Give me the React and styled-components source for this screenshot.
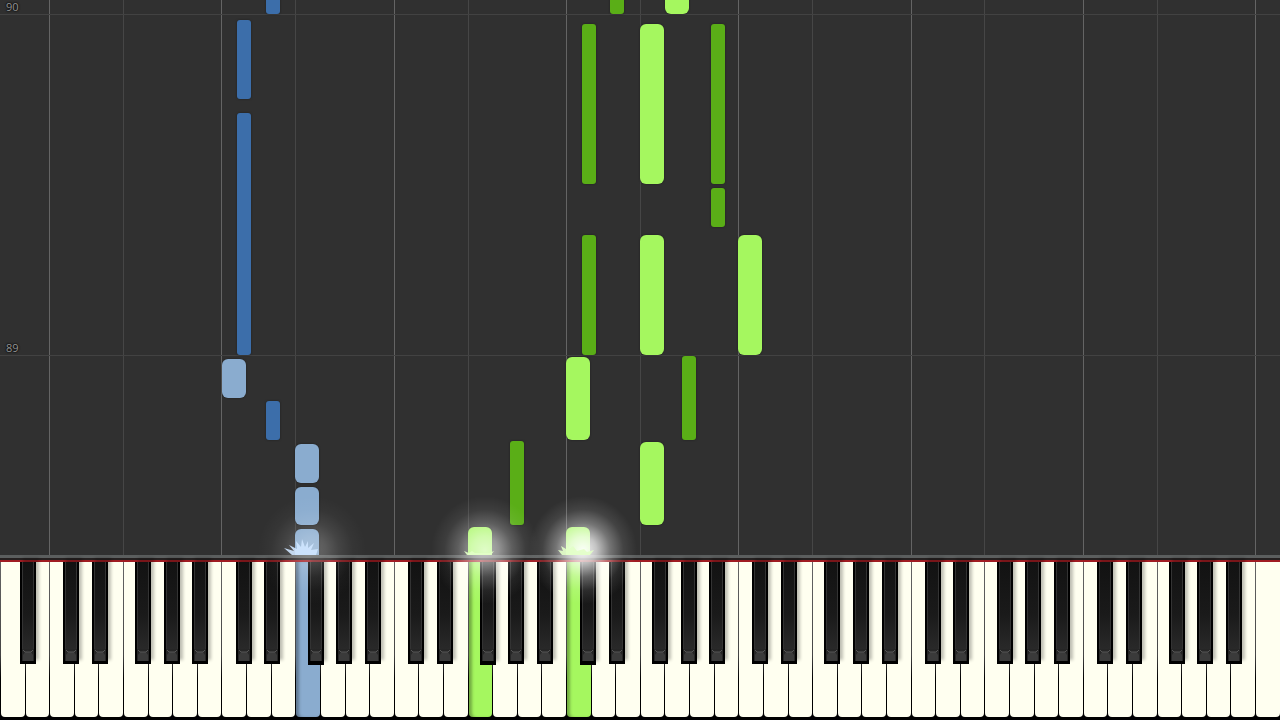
import React from 'react';
import styled, { createGlobalStyle } from 'styled-components';

const WHITE_COUNT = 52;
const SEMITONES = (WHITE_COUNT / 7) * 12;

// How far into its white key each black key starts
const BLACK_OFFSETS = { C: '57%', D: '74%', F: '50%', G: '66%', A: '82%' };
const LETTERS = ['A', 'B', 'C', 'D', 'E', 'F', 'G'];

const whiteKeys = Array.from({ length: WHITE_COUNT }, (_, index) => {
    const letter = LETTERS[index % 7];
    const octave = Math.floor((index + 5) / 7);
    const sharp = index < WHITE_COUNT - 1 ? BLACK_OFFSETS[letter] : undefined;
    return { index, letter, octave, sharp, name: `${letter}${octave}` };
});

const pressed = { F2: 'blue', F3: 'green', C4: 'green' };

const COLORS = {
    blue: { white: '#8aaccf', black: '#3c6eaa' },
    green: { white: '#a5f75f', black: '#5aae17' },
};

// start: distance above the strike line, length: height of the bar
const notes = [
    { name: 'D#2', hand: 'blue', start: 541, length: 39 },
    { name: 'C#2', hand: 'blue', start: 456, length: 79 },
    { name: 'C#2', hand: 'blue', start: 200, length: 242 },
    { name: 'C2', hand: 'blue', start: 157, length: 39 },
    { name: 'D#2', hand: 'blue', start: 115, length: 39 },
    { name: 'F2', hand: 'blue', start: 72, length: 39 },
    { name: 'F2', hand: 'blue', start: 30, length: 38 },
    { name: 'F2', hand: 'blue', start: -13, length: 39 },
    { name: 'D#4', hand: 'green', start: 541, length: 39 },
    { name: 'G4', hand: 'green', start: 541, length: 39 },
    { name: 'C#4', hand: 'green', start: 371, length: 160 },
    { name: 'F4', hand: 'green', start: 371, length: 160 },
    { name: 'A#4', hand: 'green', start: 371, length: 160 },
    { name: 'A#4', hand: 'green', start: 328, length: 39 },
    { name: 'C#4', hand: 'green', start: 200, length: 120 },
    { name: 'F4', hand: 'green', start: 200, length: 120 },
    { name: 'C5', hand: 'green', start: 200, length: 120 },
    { name: 'C4', hand: 'green', start: 115, length: 83 },
    { name: 'G#4', hand: 'green', start: 115, length: 84 },
    { name: 'G#3', hand: 'green', start: 30, length: 84 },
    { name: 'F4', hand: 'green', start: 30, length: 83 },
    { name: 'F3', hand: 'green', start: -56, length: 84 },
    { name: 'C4', hand: 'green', start: -56, length: 84 },
];

const measures = [
    { label: '90', start: 540 },
    { label: '89', start: 199 },
];

const STEPS = { C: 1, D: 3, F: 6, G: 8, A: 10 };

const noteLeft = (name) => {
    const octave = Number(name.slice(-1));
    if (name.includes('#')) {
        // only A and B come before the first C
        const firstC = (2 / WHITE_COUNT) * 100;
        const semitones = (octave - 1) * 12 + STEPS[name[0]];
        return firstC + (semitones / SEMITONES) * 100;
    }
    const white = whiteKeys.find((key) => key.name === name);
    return (white.index / WHITE_COUNT) * 100;
};

const GlobalStyle = createGlobalStyle`
    * {
        box-sizing: border-box;
    }

    body {
        margin: 0;
        background: #000;
        font-family: "Open Sans", sans-serif;
    }
`;

const PageSC = styled.main`
    min-height: 100vh;
    display: flex;
    flex-direction: column;
    overflow: hidden;
`;

const RollSC = styled.section`
    position: relative;
    flex: 1;
    min-height: 300px;
    display: flex;
    overflow: hidden;
    background: #303030;
`;

const LaneSC = styled.div`
    flex: 1;
    border-left: 1px solid ${({ $line }) => $line};
`;

const MeasureSC = styled.div`
    position: absolute;
    left: 0;
    right: 0;
    padding-left: 6px;
    border-bottom: 1px solid #424242;
    color: #949494;
    font-size: 11px;
    line-height: 14px;
    text-shadow: 0 0 2px #000, 0 0 2px #000;
`;

const NoteSC = styled.div`
    position: absolute;
    width: ${({ $black }) => ($black ? '14px' : '24px')};
    margin-left: ${({ $black }) => ($black ? '1px' : '0')};
    border-radius: ${({ $black }) => ($black ? '3px' : '6px')};
    background: ${({ $color }) => $color};
    box-shadow: 0 0 2px #1c1c1c;
`;

const RailSC = styled.div`
    height: 7px;
    border-top: 3px solid #5b5e5e;
    border-bottom: 2px solid #a01c22;
    background: #252020;
`;

const KeyboardSC = styled.section`
    height: 158px;
    display: flex;
    padding-bottom: 3px;
    background: #000;
`;

const SlotSC = styled.div`
    position: relative;
    flex: 1;
    display: flex;
    padding-left: 1px;
    background: linear-gradient(#666 0, #444 60%, #000 75%);
`;

const WhiteKeySC = styled.button`
    flex: 1;
    min-width: 0;
    padding: 0;
    border: 0;
    border-radius: 0 0 4px 4px;
    background: ${({ $color }) => $color || '#fffff0'};
    box-shadow: ${({ $color }) => ($color ? 'inset 4px 0 3px -1px rgba(0, 0, 0, 0.3)' : 'none')};
`;

const BlackKeySC = styled.button`
    position: absolute;
    z-index: 1;
    top: 0;
    left: ${({ $left }) => $left};
    width: 16px;
    height: ${({ $low }) => ($low ? '103px' : '102px')};
    padding: 0 2px ${({ $low }) => ($low ? '4px' : '3px')};
    border: 0;
    display: flex;
    flex-direction: column;
    justify-content: flex-end;
    background: #000;
    box-shadow: 3px -4px 3px rgba(0, 0, 0, 0.25);
`;

const BlackTopSC = styled.span`
    flex: 1;
    border: solid #333;
    border-width: 0 1px;
    background: linear-gradient(#121212, #1a1a1a 60%, #292929);
`;

const BlackLipSC = styled.svg`
    width: 12px;
    height: 12px;
    background: #262626;
`;

const EffectSC = styled.svg`
    position: absolute;
    z-index: 2;
    top: -72px;
    left: -48px;
    width: 120px;
    height: 120px;
    pointer-events: none;
`;

const SPARKS = {
    F2: 'M10 56 L2 49 L12 52 L7 46 L15 50 L14 42 L19 48 L20 40 L23 48 L26 42 L26 49 L32 44 L29 51 L36 50 L34 56Z',
    F3: 'M12 56 L9 52 L14 54 L17 52 L20 54 L29 54 L34 54 L39 52 L36 56Z',
    C4: 'M9 56 L5 51 L10 52 L8 47 L13 50 L13 43 L16 50 L20 47 L24 52 L31 50 L34 53 L41 51 L37 56Z',
};

const GLOW = { F2: 0.28, F3: 0.65, C4: 0.95 };

const Effect = ({ name, hand }) => {
    const id = `glow-${name}`;
    const glow = GLOW[name];
    return (
        <EffectSC viewBox="0 0 120 120" aria-hidden="true">
            <defs>
                <radialGradient id={id}>
                    <stop offset="0" stopColor="#fff" stopOpacity={glow} />
                    <stop offset="0.25" stopColor="#fff" stopOpacity={glow * 0.75} />
                    <stop offset="0.5" stopColor="#fff" stopOpacity={glow * 0.35} />
                    <stop offset="0.75" stopColor="#fff" stopOpacity={glow * 0.1} />
                    <stop offset="1" stopColor="#fff" stopOpacity="0" />
                </radialGradient>
            </defs>
            <circle cx="65" cy="60" r="54" fill={`url(#${id})`} />
            <path
                d={SPARKS[name]}
                transform="translate(35 9)"
                fill={hand === 'blue' ? '#cfe5ff' : '#e2ffc8'}
                fillOpacity="0.9"
            />
        </EffectSC>
    );
};

const laneLine = (letter) => {
    if (letter === 'C') return '#646464';
    if (letter === 'F') return '#464646';
    return 'transparent';
};

const App = () => {
    return (
        <PageSC>
            <GlobalStyle />

            <RollSC aria-label="Notes">
                {whiteKeys.map((key) => (
                    <LaneSC key={key.name} $line={laneLine(key.letter)} />
                ))}

                {measures.map(({ label, start }) => (
                    <MeasureSC key={label} style={{ bottom: start }}>{label}</MeasureSC>
                ))}

                {notes.map(({ name, hand, start, length }) => {
                    const black = name.includes('#');
                    return (
                        <NoteSC
                            key={`${name}-${start}`}
                            $black={black}
                            $color={COLORS[hand][black ? 'black' : 'white']}
                            style={{ left: `${noteLeft(name)}%`, bottom: start, height: length }}
                        />
                    );
                })}
            </RollSC>

            <RailSC />

            <KeyboardSC aria-label="Piano keyboard">
                {whiteKeys.map(({ name, sharp }) => {
                    const hand = pressed[name];
                    return (
                        <SlotSC key={name}>
                            <WhiteKeySC type="button" aria-label={name} $color={hand && COLORS[hand].white} />
                            {sharp && (
                                <BlackKeySC type="button" aria-label={`${name} sharp`} $left={sharp} $low={Boolean(hand)}>
                                    <BlackTopSC />
                                    <BlackLipSC viewBox="0 0 12 12" aria-hidden="true">
                                        <path d="M1 12 V6 L3 3 H9 L11 6 V12Z" fill="#3a3a3a" />
                                        <path d="M1 1 L3 3 H9 L11 1" fill="none" stroke="#555" />
                                    </BlackLipSC>
                                </BlackKeySC>
                            )}
                            {hand && <Effect name={name} hand={hand} />}
                        </SlotSC>
                    );
                })}
            </KeyboardSC>
        </PageSC>
    );
};

export default App;
